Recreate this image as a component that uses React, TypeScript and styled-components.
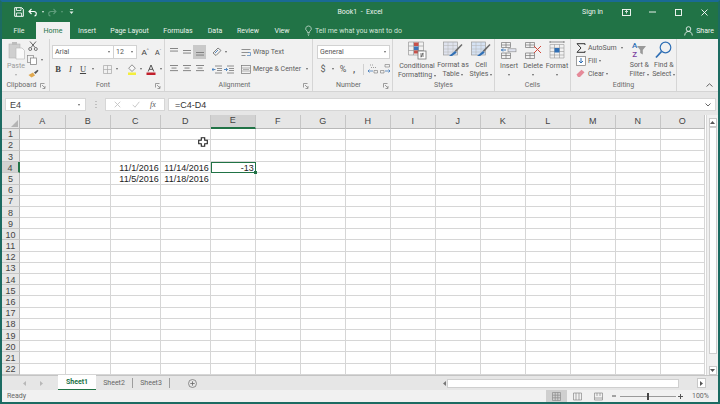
import React from 'react';
import styled, { createGlobalStyle } from 'styled-components';

const GlobalStyle = createGlobalStyle`
  html, body { margin: 0; padding: 0; background: #fff; }
  * { box-sizing: border-box; }
`;

const UI = `Roboto, "Open Sans", sans-serif`;
const GREEN = '#217346';

const Window = styled.div`
  width: 720px;
  height: 404px;
  display: flex;
  flex-direction: column;
  overflow: hidden;
  position: relative;
  border: 2px solid #1c6b62;
  border-top-color: #1a6a94;
  background: #f1f1f1;
  font-family: ${UI};
  color: #5c5c5c;
`;

/* title bar */
const TitleBar = styled.div`
  height: 20px;
  background: ${GREEN};
  display: grid;
  grid-template-columns: 1fr auto 1fr;
  align-items: center;
  color: #eef5f0;
  font-size: 7px;
`;
const Qat = styled.div`
  display: flex;
  align-items: center;
  padding-left: 10px;
`;
const TitleRight = styled.div`
  display: flex;
  align-items: center;
  justify-content: flex-end;
`;
const Slot = styled.span<{ $w: number; $on?: boolean; $h?: number; $ml?: number }>`
  flex: none;
  width: ${(p) => p.$w}px;
  height: ${(p) => p.$h ?? 13}px;
  margin-left: ${(p) => p.$ml ?? 0}px;
  display: inline-flex;
  align-items: center;
  justify-content: center;
  background: ${(p) => (p.$on ? '#c9c9c9' : 'transparent')};
`;
const Caret = styled.i<{ $c?: string }>`
  display: inline-block;
  width: 0;
  height: 0;
  border-left: 1.6px solid transparent;
  border-right: 1.6px solid transparent;
  border-top: 2px solid ${(p) => p.$c ?? '#666'};
`;

/* tabs */
const TabBar = styled.div`
  height: 17px;
  background: ${GREEN};
  display: flex;
  align-items: stretch;
  color: #e9f2ec;
  font-size: 7px;
`;
const Tab = styled.div<{ $w: number; $on?: boolean }>`
  flex: none;
  width: ${(p) => p.$w}px;
  display: flex;
  align-items: center;
  justify-content: center;
  background: ${(p) => (p.$on ? '#f1f1f1' : 'transparent')};
  color: ${(p) => (p.$on ? GREEN : 'inherit')};
`;
const TellMe = styled.div`
  display: flex;
  align-items: center;
  gap: 3px;
  margin-left: 8px;
  color: #cfe3d6;
`;
const Share = styled.div`
  margin-left: auto;
  padding-right: 4px;
  display: flex;
  align-items: center;
  gap: 3px;
  color: #eef5f0;
`;

/* ribbon */
const Ribbon = styled.div`
  height: 53px;
  display: flex;
  background: #f1f1f1;
  border-bottom: 1px solid #d4d4d4;
  position: relative;
`;
const Group = styled.div<{ $w: number }>`
  flex: none;
  width: ${(p) => p.$w}px;
  display: flex;
  flex-direction: column;
  position: relative;
  border-right: 1px solid #d6d6d6;
`;
const GroupBody = styled.div<{ $pad?: number }>`
  flex: 1;
  display: flex;
  padding-left: ${(p) => p.$pad ?? 0}px;
  min-height: 0;
`;
const GroupLabel = styled.div<{ $launch?: boolean }>`
  height: 12px;
  font-size: 7px;
  line-height: 13px;
  text-align: center;
  color: #6a6a6a;
  padding-right: ${(p) => (p.$launch ? 8 : 0)}px;
`;
const Launcher = styled.span`
  position: absolute;
  right: 3px;
  bottom: 2px;
  display: flex;
`;
const Stack = styled.div<{ $top?: number; $gap?: number }>`
  display: flex;
  flex-direction: column;
  padding-top: ${(p) => p.$top ?? 6}px;
  gap: ${(p) => p.$gap ?? 3}px;
`;
const Row = styled.div<{ $h?: number; $mt?: number }>`
  display: flex;
  align-items: center;
  height: ${(p) => p.$h ?? 14}px;
  margin-top: ${(p) => p.$mt ?? 0}px;
`;
const Combo = styled.div<{ $w: number; $joined?: boolean }>`
  flex: none;
  width: ${(p) => p.$w}px;
  height: 14px;
  background: #fff;
  border: 1px solid #d2d2d2;
  border-left-width: ${(p) => (p.$joined ? 0 : 1)}px;
  display: flex;
  align-items: center;
  justify-content: space-between;
  padding: 0 3px 0 2px;
  font-size: 7px;
  color: #555;
`;
const SmallText = styled.span<{ $ml?: number; $size?: number; $bold?: boolean }>`
  margin-left: ${(p) => p.$ml ?? 0}px;
  font-size: ${(p) => p.$size ?? 7}px;
  font-weight: ${(p) => (p.$bold ? 700 : 400)};
  color: #5c5c5c;
  white-space: nowrap;
`;
const SignIn = styled.span`
  color: #eef5f0;
`;
const Letter = styled.span<{ $b?: boolean; $i?: boolean; $u?: boolean }>`
  font-family: "Liberation Serif", serif;
  font-size: 8.5px;
  font-weight: ${(p) => (p.$b ? 700 : 400)};
  font-style: ${(p) => (p.$i ? 'italic' : 'normal')};
  text-decoration: ${(p) => (p.$u ? 'underline' : 'none')};
  color: #444;
`;
const GrowFont = styled.span<{ $size: number }>`
  font-family: "Liberation Sans", sans-serif;
  font-size: ${(p) => p.$size}px;
  color: #444;
  sup {
    font-size: 4px;
  }
`;
const BigButton = styled.div<{ $w: number; $muted?: boolean }>`
  flex: none;
  width: ${(p) => p.$w}px;
  display: flex;
  flex-direction: column;
  align-items: center;
  padding-top: 2px;
  font-size: 7px;
  line-height: 9px;
  color: ${(p) => (p.$muted ? '#9a9a9a' : '#5c5c5c')};
  white-space: nowrap;
`;
const BigIcon = styled.div`
  height: 20px;
  display: flex;
  align-items: center;
  margin-bottom: 2px;
`;
const Line = styled.div`
  display: flex;
  align-items: center;
  gap: 2px;
  height: 9px;
`;
const SortLetters = styled.span`
  display: flex;
  flex-direction: column;
  align-items: center;
  font-size: 8px;
  line-height: 9px;
  font-weight: 500;
  color: #2f6fb5;
  b {
    font-weight: 500;
    color: #7b3fa0;
  }
`;
const Collapse = styled.span`
  position: absolute;
  right: 5px;
  bottom: 4px;
  display: flex;
`;

/* formula bar */
const FormulaBar = styled.div`
  height: 23px;
  background: #e6e6e6;
  display: flex;
  align-items: flex-start;
  padding: 6px 2px 0 3px;
`;
const NameBox = styled.div`
  width: 81px;
  height: 13px;
  background: #fff;
  border: 1px solid #d6d6d6;
  display: flex;
  align-items: center;
  justify-content: space-between;
  padding: 0 5px 0 4px;
  font: 9px "Liberation Sans", sans-serif;
  color: #444;
`;
const Dots = styled.div`
  width: 19px;
  height: 13px;
  display: flex;
  align-items: center;
  justify-content: center;
`;
const FxBox = styled.div`
  width: 60px;
  height: 13px;
  background: #fff;
  border: 1px solid #d6d6d6;
  display: flex;
  align-items: center;
  justify-content: space-around;
  padding: 0 3px;
  margin-right: 3px;
`;
const FxText = styled.span`
  font: italic 8px "Liberation Serif", serif;
  color: #555;
`;
const FormulaInput = styled.div`
  flex: 1;
  height: 13px;
  background: #fff;
  border: 1px solid #d6d6d6;
  display: flex;
  align-items: center;
  justify-content: space-between;
  padding: 0 4px 0 6px;
  font: 9px "Liberation Sans", sans-serif;
  color: #333;
`;

/* sheet */
const SheetArea = styled.div`
  height: 260px;
  display: flex;
  background: #e6e6e6;
  position: relative;
`;
const Grid = styled.div`
  display: grid;
  grid-template-columns: 18px 45.7px 45px 50px 50px repeat(10, 45px) 44.3px;
  grid-template-rows: 13.6px repeat(22, 11.2px);
  width: 703.7px;
  background: #fff;
  font: 9px "Liberation Sans", sans-serif;
`;
const Corner = styled.div`
  background: #e6e6e6;
  border-right: 1px solid #b8b8b8;
  border-bottom: 1px solid #b8b8b8;
  position: relative;
`;
const CornerMark = styled.span`
  position: absolute;
  right: 1px;
  bottom: 1px;
  width: 0;
  height: 0;
  border-left: 7px solid transparent;
  border-bottom: 7px solid #b4b4b4;
`;
const ColHead = styled.div<{ $on?: boolean }>`
  background: ${(p) => (p.$on ? '#d2d2d2' : '#e6e6e6')};
  border-right: 1px solid #c6c6c6;
  border-bottom: ${(p) => (p.$on ? `2px solid ${GREEN}` : '1px solid #b8b8b8')};
  display: flex;
  align-items: center;
  justify-content: center;
  color: #444;
  line-height: 1;
`;
const RowHead = styled.div<{ $on?: boolean }>`
  background: ${(p) => (p.$on ? '#d2d2d2' : '#e6e6e6')};
  border-right: ${(p) => (p.$on ? `2px solid ${GREEN}` : '1px solid #b8b8b8')};
  border-bottom: 1px solid #c6c6c6;
  display: flex;
  align-items: center;
  justify-content: center;
  padding-top: 2px;
  color: #444;
  line-height: 1;
`;
const Cell = styled.div<{ $active?: boolean }>`
  border-right: 1px solid #d6d6d6;
  border-bottom: 1px solid #d6d6d6;
  display: flex;
  align-items: center;
  justify-content: flex-end;
  padding: 2px 1px 0 0;
  color: #222;
  line-height: 1;
  white-space: nowrap;
  position: relative;
  ${(p) => p.$active && `outline: 1.5px solid ${GREEN}; outline-offset: -1px; z-index: 1;`}
`;
const FillHandle = styled.span`
  position: absolute;
  right: -2px;
  bottom: -2px;
  width: 3px;
  height: 3px;
  background: ${GREEN};
`;
const Pointer = styled.span`
  position: absolute;
  left: 196px;
  top: 22px;
  display: flex;
  z-index: 2;
`;
const VScroll = styled.div`
  flex: 1;
  display: flex;
  flex-direction: column;
  padding: 3px 1px 0 2px;
  background: #f0f0f0;
  border-left: 1px solid #d8d8d8;
`;
const ScrollBtn = styled.div`
  flex: none;
  height: 9px;
  background: #fff;
  border: 1px solid #c8c8c8;
  display: flex;
  align-items: center;
  justify-content: center;
`;
const VThumb = styled.div`
  height: 227px;
  background: #fff;
  border: 1px solid #cfcfcf;
`;
const ScrollGap = styled.div`
  flex: 1;
`;

/* sheet tabs */
const SheetBar = styled.div`
  height: 15px;
  background: #e6e6e6;
  display: flex;
  align-items: stretch;
  font-size: 7px;
  border-top: 1px solid #c4c4c4;
`;
const NavArrows = styled.div`
  width: 56px;
  display: flex;
  align-items: center;
  justify-content: space-evenly;
  padding-left: 6px;
`;
const SheetTab = styled.div<{ $on?: boolean; $w: number }>`
  width: ${(p) => p.$w}px;
  display: flex;
  align-items: center;
  justify-content: center;
  background: ${(p) => (p.$on ? '#fff' : 'transparent')};
  color: ${(p) => (p.$on ? GREEN : '#666')};
  font-weight: ${(p) => (p.$on ? 700 : 400)};
  border-bottom: ${(p) => (p.$on ? `1.5px solid ${GREEN}` : 'none')};
  margin-top: ${(p) => (p.$on ? '-1px' : 0)};
`;
const TabSep = styled.div`
  width: 1px;
  margin: 2px 0;
  background: #9d9d9d;
`;
const NumberSep = styled.div`
  width: 1px;
  height: 11px;
  background: #cfcfcf;
`;
const AddSheet = styled.div`
  width: 44px;
  display: flex;
  align-items: center;
  justify-content: center;
`;
const HScroll = styled.div`
  margin-left: auto;
  width: 277px;
  display: flex;
  align-items: center;
  padding-right: 12px;
`;
const HThumb = styled.div`
  flex: none;
  width: 232px;
  height: 9px;
  background: #fff;
  border: 1px solid #cfcfcf;
`;
const HBtn = styled.div`
  flex: none;
  margin-left: auto;
  width: 9px;
  height: 10px;
  background: #fff;
  border: 1px solid #c8c8c8;
  display: flex;
  align-items: center;
  justify-content: center;
`;

/* status bar */
const StatusBar = styled.div`
  height: 12px;
  background: #f1f1f1;
  display: flex;
  align-items: center;
  padding-left: 5px;
  font-size: 7px;
  color: #666;
`;
const StatusRight = styled.div`
  margin-left: auto;
  display: flex;
  align-items: center;
  height: 100%;
`;
const ViewBtn = styled.span<{ $on?: boolean }>`
  width: 21px;
  height: 100%;
  display: flex;
  align-items: center;
  justify-content: center;
  background: ${(p) => (p.$on ? '#cfcfcf' : 'transparent')};
`;
const Slider = styled.div`
  width: 56px;
  height: 1px;
  margin-left: 2px;
  background: #9a9a9a;
  position: relative;
`;
const SliderKnob = styled.span`
  position: absolute;
  left: 27px;
  top: -3px;
  width: 2px;
  height: 7px;
  background: #444;
`;
const ZoomLabel = styled.span`
  width: 33px;
  padding-left: 7px;
`;

/* icons */
const Glyph = styled.svg`
  display: block;
  flex: none;
`;
const I: React.FC<{ w: number; h: number; children: React.ReactNode }> = ({ w, h, children }) => (
  <Glyph width={w} height={h} viewBox={`0 0 ${w} ${h}`} fill="none">
    {children}
  </Glyph>
);

const Launch = () => (
  <Launcher>
    <I w={6} h={6}>
      <path d="M.5.5h4M.5.5v4M2 2l3 3M5 3v2.500H2.500" stroke="#888" strokeWidth=".8" />
    </I>
  </Launcher>
);

const Lines: React.FC<{ widths: number[]; dy?: number }> = ({ widths, dy = 0 }) => (
  <I w={10} h={12}>
    {widths.map((wd, k) => (
      <rect key={k} x={(10 - wd) / 2} y={dy + k * 2.6} width={wd} height=".9" fill="#7a7a7a" />
    ))}
  </I>
);

const CondIcon = () => (
  <I w={19} h={19}>
    <path d="M.5 1h15v13H.5zM5.500 1v13M10.500 1v13M.5 5h15M.5 9.500h15" stroke="#999" strokeWidth=".7" />
    <rect x="6" y="1.500" width="4.500" height="3.500" fill="#c8514a" />
    <rect x="6" y="5.500" width="4.500" height="3.500" fill="#3d74b8" />
    <rect x="6" y="9.500" width="4.500" height="3" fill="#c8514a" />
    <rect x="10" y="10" width="8" height="8" fill="#fff" stroke="#777" strokeWidth=".8" />
    <path d="M12 13h4M12 15h4M15 11.800l-2 4.600" stroke="#444" strokeWidth=".7" />
  </I>
);

const TablePaint: React.FC<{ fill?: string }> = ({ fill = '#dfe3ee' }) => (
  <I w={20} h={18}>
    <rect x=".5" y="1" width="14" height="13" fill={fill} stroke="#9a9a9a" strokeWidth=".7" />
    <path d="M.5 4.500h14M.5 8h14M.5 11h14M5 1v13M10 1v13" stroke="#b3b3b3" strokeWidth=".5" />
    <path d="M18.500 3l1 1-6.500 7-1.500-1z" fill="#6a6a6a" />
    <path d="M12 10l1.700 1.700L9 15H6z" fill="#2f6fb5" />
  </I>
);

const Scissors = () => (
  <I w={11} h={10}>
    <path d="M2 .5l5 6M8 .5l-5 6" stroke="#555" strokeWidth=".9" />
    <circle cx="2.200" cy="8" r="1.500" stroke="#555" strokeWidth=".8" />
    <circle cx="7.800" cy="8" r="1.500" stroke="#555" strokeWidth=".8" />
  </I>
);

const IndentIcon: React.FC<{ arrow: string }> = ({ arrow }) => (
  <I w={10} h={9}>
    <path d="M3 1h7M5 3.500h5M5 5.500h5M3 8h7" stroke="#777" strokeWidth=".8" />
    <path d={arrow} stroke="#2f6fb5" strokeWidth=".8" />
  </I>
);

const columns = ['A', 'B', 'C', 'D', 'E', 'F', 'G', 'H', 'I', 'J', 'K', 'L', 'M', 'N', 'O'];
const rowsCount = 22;
const cellData: Record<string, string> = {
  C4: '11/1/2016',
  D4: '11/14/2016',
  E4: '-13',
  C5: '11/5/2016',
  D5: '11/18/2016',
};

const App: React.FC = () => {
  return (
    <Window>
      <GlobalStyle />
      <TitleBar>
        <Qat>
          <Slot $w={14}>
            <I w={10} h={10}>
              <path d="M.7.700h7l1.600 1.600v7H.7z" stroke="#fff" strokeWidth="1" />
              <path d="M2.500 1v2.500h4.500V1M2.500 9V6h5v3" stroke="#fff" strokeWidth=".8" />
            </I>
          </Slot>
          <Slot $w={14}>
            <I w={10} h={9}>
              <path d="M3.500 1L1 3.500 3.500 6M1.500 3.500H6c3 0 3 4 .5 4.500" stroke="#fff" strokeWidth="1.100" />
            </I>
          </Slot>
          <Slot $w={6}><Caret $c="#e5efe9" /></Slot>
          <Slot $w={12}>
            <I w={10} h={9}>
              <path d="M6.500 1L9 3.500 6.500 6M8.500 3.500H4c-3 0-3 4-.5 4.500" stroke="#5f9d7c" strokeWidth="1.100" />
            </I>
          </Slot>
          <Slot $w={7}><Caret $c="#5f9d7c" /></Slot>
          <Slot $w={12}>
            <I w={5} h={6}>
              <path d="M1 .5h3" stroke="#e5efe9" strokeWidth=".8" />
              <path d="M.5 2.500h4L2.500 5z" fill="#e5efe9" />
            </I>
          </Slot>
        </Qat>
        <span>Book1&nbsp; -&nbsp; Excel</span>
        <TitleRight>
          <SignIn>Sign in</SignIn>
          <Slot $w={24} $ml={11}>
            <I w={9} h={7}>
              <rect x=".5" y=".5" width="8" height="6" stroke="#fff" strokeWidth=".9" />
              <path d="M4.500 1.500v3M3 3l1.500-1.500L6 3" stroke="#fff" strokeWidth=".8" />
            </I>
          </Slot>
          <Slot $w={28}><I w={7} h={2}><path d="M0 1h7" stroke="#fff" strokeWidth=".9" /></I></Slot>
          <Slot $w={24}><I w={7} h={7}><rect x=".5" y=".5" width="6" height="6" stroke="#fff" strokeWidth=".9" /></I></Slot>
          <Slot $w={28}><I w={7} h={7}><path d="M.5.500l6 6M6.500.500l-6 6" stroke="#fff" strokeWidth=".9" /></I></Slot>
        </TitleRight>
      </TitleBar>

      <TabBar>
        <Tab $w={34}>File</Tab>
        <Tab $w={34} $on>Home</Tab>
        <Tab $w={34}>Insert</Tab>
        <Tab $w={51}>Page Layout</Tab>
        <Tab $w={46}>Formulas</Tab>
        <Tab $w={28}>Data</Tab>
        <Tab $w={38}>Review</Tab>
        <Tab $w={30}>View</Tab>
        <TellMe>
          <I w={7} h={11}>
            <path d="M3.500 1a2.700 2.700 0 0 0-1.500 5c.4.400.5 1 .5 1.500h2c0-.5.100-1.100.5-1.500A2.700 2.700 0 0 0 3.500 1zM2.500 9h2M3 10.300h1" stroke="#dcebe2" strokeWidth=".7" />
          </I>
          Tell me what you want to do
        </TellMe>
        <Share>
          <I w={9} h={10}>
            <circle cx="4.500" cy="3" r="2.300" stroke="#fff" strokeWidth=".8" />
            <path d="M.7 9.500c.3-3 1.800-4 3.800-4s3.500 1 3.800 4" stroke="#fff" strokeWidth=".8" />
          </I>
          Share
        </Share>
      </TabBar>

      <Ribbon>
        <Group $w={48}>
          <GroupBody $pad={4}>
            <BigButton $w={20} $muted>
              <BigIcon>
                <I w={17} h={19}>
                  <rect x="1" y="3" width="11" height="14" fill="#cfcfcf" stroke="#b5b5b5" strokeWidth=".6" />
                  <rect x="4" y="1" width="5" height="3" fill="#bdbdbd" />
                  <path d="M8 7h6l2.500 2.500V18H8z" fill="#fafafa" stroke="#bbb" strokeWidth=".7" />
                </I>
              </BigIcon>
              <Line>Paste</Line>
              <Line><Caret $c="#aaa" /></Line>
            </BigButton>
            <Stack $top={1} $gap={1}>
              <Slot $w={14} $h={12}><Scissors /></Slot>
              <Row $h={12} $mt={1}>
                <Slot $w={12} $h={12}>
                  <I w={10} h={10}>
                    <rect x=".5" y=".5" width="6" height="7" fill="#f3f3f3" stroke="#888" strokeWidth=".7" />
                    <rect x="3.500" y="3" width="6" height="6.500" fill="#fff" stroke="#777" strokeWidth=".7" />
                  </I>
                </Slot>
                <Slot $w={5} $h={12} $ml={1}><Caret /></Slot>
              </Row>
              <Slot $w={14} $h={12}>
                <I w={11} h={9}>
                  <path d="M.5 6L5 3.500 7 6.500 3.500 8.500z" fill="#e0a84e" />
                  <path d="M6 3.500L9.500.700l1 1L7.500 5z" fill="#555" />
                </I>
              </Slot>
            </Stack>
          </GroupBody>
          <GroupLabel $launch>Clipboard</GroupLabel>
          <Launch />
        </Group>

        <Group $w={115}>
          <GroupBody $pad={2}>
            <Stack>
              <Row>
                <Combo $w={62}>Arial<Caret /></Combo>
                <Combo $w={23} $joined>12<Caret /></Combo>
                <Slot $w={14} $ml={1}><GrowFont $size={8}>A<sup>^</sup></GrowFont></Slot>
                <Slot $w={12}><GrowFont $size={7}>A<sup>ˇ</sup></GrowFont></Slot>
              </Row>
              <Row>
                <Slot $w={12}><Letter $b>B</Letter></Slot>
                <Slot $w={13}><Letter $i>I</Letter></Slot>
                <Slot $w={12}><Letter $u>U</Letter></Slot>
                <Slot $w={7}><Caret /></Slot>
                <Slot $w={12} $ml={5}>
                  <I w={9} h={9}>
                    <path d="M.5.500h8v8h-8zM4.500.500v8M.5 4.500h8" stroke="#a8a8a8" strokeWidth=".7" />
                  </I>
                </Slot>
                <Slot $w={7}><Caret /></Slot>
                <Slot $w={12} $ml={6}>
                  <I w={10} h={11}>
                    <path d="M5 .8L8.300 4.200 5 7.500 1.700 4.200z" fill="#f7f7f7" stroke="#666" strokeWidth=".7" />
                    <rect x="1" y="8.500" width="8" height="2.500" fill="#f4ee3c" />
                  </I>
                </Slot>
                <Slot $w={6}><Caret /></Slot>
                <Slot $w={14}>
                  <I w={10} h={11}>
                    <path d="M2.200 7.500L5 1l2.800 6.500M3.200 5.300h3.600" stroke="#444" strokeWidth=".9" />
                    <rect x=".5" y="8.500" width="9" height="2.500" fill="#c2202c" />
                  </I>
                </Slot>
                <Slot $w={5}><Caret /></Slot>
              </Row>
            </Stack>
          </GroupBody>
          <GroupLabel $launch>Font</GroupLabel>
          <Launch />
        </Group>

        <Group $w={148}>
          <GroupBody $pad={3}>
            <Stack>
              <Row>
                <Slot $w={12}><Lines widths={[8, 8]} dy={2} /></Slot>
                <Slot $w={13}><Lines widths={[8, 8]} dy={4} /></Slot>
                <Slot $w={13} $on $h={14}><Lines widths={[8, 8]} dy={6} /></Slot>
                <Slot $w={13} $ml={4}>
                  <I w={10} h={10}>
                    <path d="M1 6l5-5 3 2.500-5 5z" stroke="#666" strokeWidth=".8" />
                    <path d="M3 6l3-3" stroke="#2f6fb5" strokeWidth=".8" />
                  </I>
                </Slot>
                <Slot $w={5}><Caret /></Slot>
                <Slot $w={12} $ml={12}>
                  <I w={10} h={9}>
                    <path d="M.5 1.500h9M.5 4.500h7M.5 7.500h4" stroke="#777" strokeWidth=".8" />
                    <path d="M7 4.500h2.500V7.500H6" stroke="#2f6fb5" strokeWidth=".6" />
                  </I>
                </Slot>
                <SmallText $ml={1}>Wrap Text</SmallText>
              </Row>
              <Row>
                <Slot $w={12}><Lines widths={[8, 5, 8]} dy={2} /></Slot>
                <Slot $w={13}><Lines widths={[8, 5, 8]} dy={2} /></Slot>
                <Slot $w={13}><Lines widths={[8, 5, 8]} dy={2} /></Slot>
                <Slot $w={12} $ml={5}><IndentIcon arrow="M0 4.500h3.500M1.500 3L0 4.500 1.500 6" /></Slot>
                <Slot $w={12}><IndentIcon arrow="M0 4.500h3.500M2 3l1.500 1.500L2 6" /></Slot>
                <Slot $w={12} $ml={5}>
                  <I w={10} h={9}>
                    <rect x=".5" y=".5" width="9" height="8" stroke="#777" strokeWidth=".7" />
                    <path d="M.5 3h9M.5 6h9M2 4.500h6" stroke="#888" strokeWidth=".6" />
                  </I>
                </Slot>
                <SmallText $ml={1}>Merge &amp; Center</SmallText>
                <Slot $w={12}><Caret /></Slot>
              </Row>
            </Stack>
          </GroupBody>
          <GroupLabel $launch>Alignment</GroupLabel>
          <Launch />
        </Group>

        <Group $w={80}>
          <GroupBody $pad={4}>
            <Stack>
              <Row><Combo $w={73}>General<Caret /></Combo></Row>
              <Row>
                <Slot $w={12}><SmallText $size={9}>$</SmallText></Slot>
                <Slot $w={7}><Caret /></Slot>
                <Slot $w={14}><SmallText $size={9}>%</SmallText></Slot>
                <Slot $w={8}><SmallText $size={9} $bold>,</SmallText></Slot>
                <Slot $w={10}><NumberSep /></Slot>
                <Slot $w={9}>
                  <I w={10} h={10}>
                    <path d="M5 1H1.500M3 3.500h6" stroke="#777" strokeWidth=".7" strokeDasharray="1 1" />
                    <path d="M0 7h5M1.500 5.500L0 7l1.500 1.500" stroke="#2f6fb5" strokeWidth=".7" />
                    <path d="M6 6.500h3.500v2.500H6z" stroke="#777" strokeWidth=".6" />
                  </I>
                </Slot>
                <Slot $w={16}>
                  <I w={10} h={10}>
                    <path d="M5 3h4.500V.5H5z" stroke="#777" strokeWidth=".6" />
                    <path d="M5 7h5M8.500 5.500L10 7 8.500 8.500" stroke="#2f6fb5" strokeWidth=".7" />
                    <path d="M.5 6.500h3.500v2.500H.5z" stroke="#777" strokeWidth=".6" />
                  </I>
                </Slot>
              </Row>
            </Stack>
          </GroupBody>
          <GroupLabel $launch>Number</GroupLabel>
          <Launch />
        </Group>

        <Group $w={102}>
          <GroupBody $pad={5}>
            <BigButton $w={38}>
              <BigIcon><CondIcon /></BigIcon>
              <Line>Conditional</Line>
              <Line>Formatting <Caret /></Line>
            </BigButton>
            <BigButton $w={34}>
              <BigIcon><TablePaint /></BigIcon>
              <Line>Format as</Line>
              <Line>Table <Caret /></Line>
            </BigButton>
            <BigButton $w={22}>
              <BigIcon><TablePaint fill="#d5e2f3" /></BigIcon>
              <Line>Cell</Line>
              <Line>Styles <Caret /></Line>
            </BigButton>
          </GroupBody>
          <GroupLabel>Styles</GroupLabel>
        </Group>

        <Group $w={76}>
          <GroupBody $pad={2}>
            <BigButton $w={24}>
              <BigIcon>
                <I w={16} h={17}>
                  <path d="M.5.500h9v5h-9zM.5 3h9M5 .5v5M.5 11h9v5.500h-9zM.5 13.500h9M5 11v5.500" stroke="#777" strokeWidth=".7" />
                  <path d="M0 8h5M2 6.500L.5 8 2 9.500" stroke="#2f6fb5" strokeWidth=".9" />
                  <rect x="7" y="6.800" width="8" height="3" fill="#dfe3ee" stroke="#888" strokeWidth=".6" />
                </I>
              </BigIcon>
              <Line>Insert</Line>
              <Line><Caret /></Line>
            </BigButton>
            <BigButton $w={24}>
              <BigIcon>
                <I w={17} h={17}>
                  <path d="M.5.500h9v5h-9zM.5 3h9M5 .5v5M.5 11h9v5.500h-9zM.5 13.500h9M5 11v5.500" stroke="#777" strokeWidth=".7" />
                  <path d="M9 4l7 7M16 4l-7 7" stroke="#d4473a" strokeWidth="1" />
                </I>
              </BigIcon>
              <Line>Delete</Line>
              <Line><Caret /></Line>
            </BigButton>
            <BigButton $w={24}>
              <BigIcon>
                <I w={16} h={18}>
                  <path d="M1 3.500h14V17H1zM1 7h14M1 10.500h14M1 14h14M5.500 3.500V17M10.500 3.500V17" stroke="#999" strokeWidth=".6" />
                  <rect x="5.500" y="7" width="5" height="4.500" fill="#2f6fb5" />
                  <path d="M1 1h14M1 0v2M15 0v2" stroke="#666" strokeWidth=".7" />
                </I>
              </BigIcon>
              <Line>Format</Line>
              <Line><Caret /></Line>
            </BigButton>
          </GroupBody>
          <GroupLabel>Cells</GroupLabel>
        </Group>

        <Group $w={106}>
          <GroupBody $pad={3}>
            <Stack $top={2} $gap={0}>
              <Row $h={13}>
                <Slot $w={13}>
                  <I w={10} h={10}>
                    <path d="M9 2V.7H1l4 4.300-4 4.300h8V8" stroke="#333" strokeWidth="1" />
                  </I>
                </Slot>
                <SmallText $ml={1}>AutoSum</SmallText>
                <Slot $w={10}><Caret /></Slot>
              </Row>
              <Row $h={13}>
                <Slot $w={13}>
                  <I w={10} h={10}>
                    <rect x=".5" y=".5" width="9" height="9" fill="#fff" stroke="#777" strokeWidth=".7" />
                    <path d="M5 2v5M3 5l2 2 2-2" stroke="#2f6fb5" strokeWidth="1" />
                  </I>
                </Slot>
                <SmallText $ml={1}>Fill</SmallText>
                <Slot $w={6}><Caret /></Slot>
              </Row>
              <Row $h={13}>
                <Slot $w={13}>
                  <I w={9} h={9}>
                    <path d="M.5 5.500L5.500.700l3 2.600L4 8H2z" fill="#e58a99" />
                  </I>
                </Slot>
                <SmallText $ml={1}>Clear</SmallText>
                <Slot $w={6}><Caret /></Slot>
              </Row>
            </Stack>
            <BigButton $w={25}>
              <BigIcon>
                <SortLetters>
                  <span>A</span>
                  <b>Z</b>
                </SortLetters>
                <I w={9} h={10}>
                  <path d="M0 1h9L5.800 5v4.500l-2.600-1.500V5z" fill="#999" />
                </I>
              </BigIcon>
              <Line>Sort &amp;</Line>
              <Line>Filter <Caret /></Line>
            </BigButton>
            <BigButton $w={24}>
              <BigIcon>
                <I w={17} h={18}>
                  <circle cx="10.500" cy="6.500" r="5.300" stroke="#2f6fb5" strokeWidth="1.200" />
                  <path d="M6.500 10.500L1 16.500" stroke="#2f6fb5" strokeWidth="1.800" />
                </I>
              </BigIcon>
              <Line>Find &amp;</Line>
              <Line>Select <Caret /></Line>
            </BigButton>
          </GroupBody>
          <GroupLabel>Editing</GroupLabel>
        </Group>

        <Collapse>
          <I w={7} h={4}><path d="M.5 3.500L3.500.8l3 2.700" stroke="#555" strokeWidth=".9" /></I>
        </Collapse>
      </Ribbon>

      <FormulaBar>
        <NameBox>E4<Caret /></NameBox>
        <Dots>
          <I w={2} h={7}><path d="M1 0v1M1 3v1M1 6v1" stroke="#999" strokeWidth="1" /></I>
        </Dots>
        <FxBox>
          <I w={7} h={7}><path d="M.7.700l5.600 5.600M6.300.700L.7 6.300" stroke="#c4c4c4" strokeWidth=".9" /></I>
          <I w={8} h={7}><path d="M.7 3.800L3 6.200 7.300.8" stroke="#c4c4c4" strokeWidth=".9" /></I>
          <FxText>fx</FxText>
        </FxBox>
        <FormulaInput>
          =C4-D4
          <I w={6} h={4}><path d="M.5.500L3 3l2.500-2.500" stroke="#555" strokeWidth=".9" /></I>
        </FormulaInput>
      </FormulaBar>

      <SheetArea>
        <Grid>
          <Corner><CornerMark /></Corner>
          {columns.map((c) => (
            <ColHead key={c} $on={c === 'E'}>{c}</ColHead>
          ))}
          {Array.from({ length: rowsCount }, (_, r) => (
            <React.Fragment key={r}>
              <RowHead $on={r === 3}>{r + 1}</RowHead>
              {columns.map((c) => {
                const id = `${c}${r + 1}`;
                const active = id === 'E4';
                return (
                  <Cell key={id} $active={active}>
                    {cellData[id]}
                    {active && <FillHandle />}
                  </Cell>
                );
              })}
            </React.Fragment>
          ))}
        </Grid>
        <Pointer>
          <I w={10} h={10}>
            <path d="M3.300.7h3.400v2.600h2.600v3.400H6.700v2.600H3.300V6.700H.7V3.300h2.600z" fill="#fff" stroke="#222" strokeWidth="1.100" />
          </I>
        </Pointer>
        <VScroll>
          <ScrollBtn><I w={5} h={3}><path d="M0 3l2.500-3L5 3z" fill="#555" /></I></ScrollBtn>
          <VThumb />
          <ScrollGap />
          <ScrollBtn><I w={5} h={3}><path d="M0 0l2.500 3L5 0z" fill="#555" /></I></ScrollBtn>
        </VScroll>
      </SheetArea>

      <SheetBar>
        <NavArrows>
          <I w={3} h={5}><path d="M3 0L0 2.500 3 5z" fill="#b8b8b8" /></I>
          <I w={3} h={5}><path d="M0 0l3 2.500L0 5z" fill="#b8b8b8" /></I>
        </NavArrows>
        <SheetTab $w={38} $on>Sheet1</SheetTab>
        <SheetTab $w={36}>Sheet2</SheetTab>
        <TabSep />
        <SheetTab $w={36}>Sheet3</SheetTab>
        <TabSep />
        <AddSheet>
          <I w={9} h={9}>
            <circle cx="4.500" cy="4.500" r="4" stroke="#777" strokeWidth=".8" />
            <path d="M4.500 2.300v4.400M2.300 4.500h4.400" stroke="#666" strokeWidth=".8" />
          </I>
        </AddSheet>
        <HScroll>
          <Slot $w={6}><I w={3} h={5}><path d="M3 0L0 2.500 3 5z" fill="#777" /></I></Slot>
          <HThumb />
          <HBtn><I w={3} h={5}><path d="M0 0l3 2.500L0 5z" fill="#555" /></I></HBtn>
        </HScroll>
      </SheetBar>

      <StatusBar>
        Ready
        <StatusRight>
          <ViewBtn $on>
            <I w={9} h={9}>
              <path d="M.5.500h8v8h-8zM3.200.500v8M5.800.500v8M.5 3.200h8M.5 5.800h8" stroke="#8a8a8a" strokeWidth=".7" />
            </I>
          </ViewBtn>
          <ViewBtn>
            <I w={9} h={9}>
              <path d="M.5 1h8v7h-8zM3 1v7M6 1v7" stroke="#888" strokeWidth=".7" />
            </I>
          </ViewBtn>
          <ViewBtn>
            <I w={9} h={9}>
              <path d="M.5 1h8v7h-8zM3 1v3M6 1v3M.5 6h8" stroke="#888" strokeWidth=".7" />
            </I>
          </ViewBtn>
          <Slot $w={9} $h={12}>
            <I w={4} h={2}><path d="M0 1h4" stroke="#555" strokeWidth="1" /></I>
          </Slot>
          <Slider><SliderKnob /></Slider>
          <Slot $w={9} $h={12}>
            <I w={5} h={5}><path d="M0 2.500h5M2.500 0v5" stroke="#555" strokeWidth="1" /></I>
          </Slot>
          <ZoomLabel>100%</ZoomLabel>
        </StatusRight>
      </StatusBar>
    </Window>
  );
};

export default App;
